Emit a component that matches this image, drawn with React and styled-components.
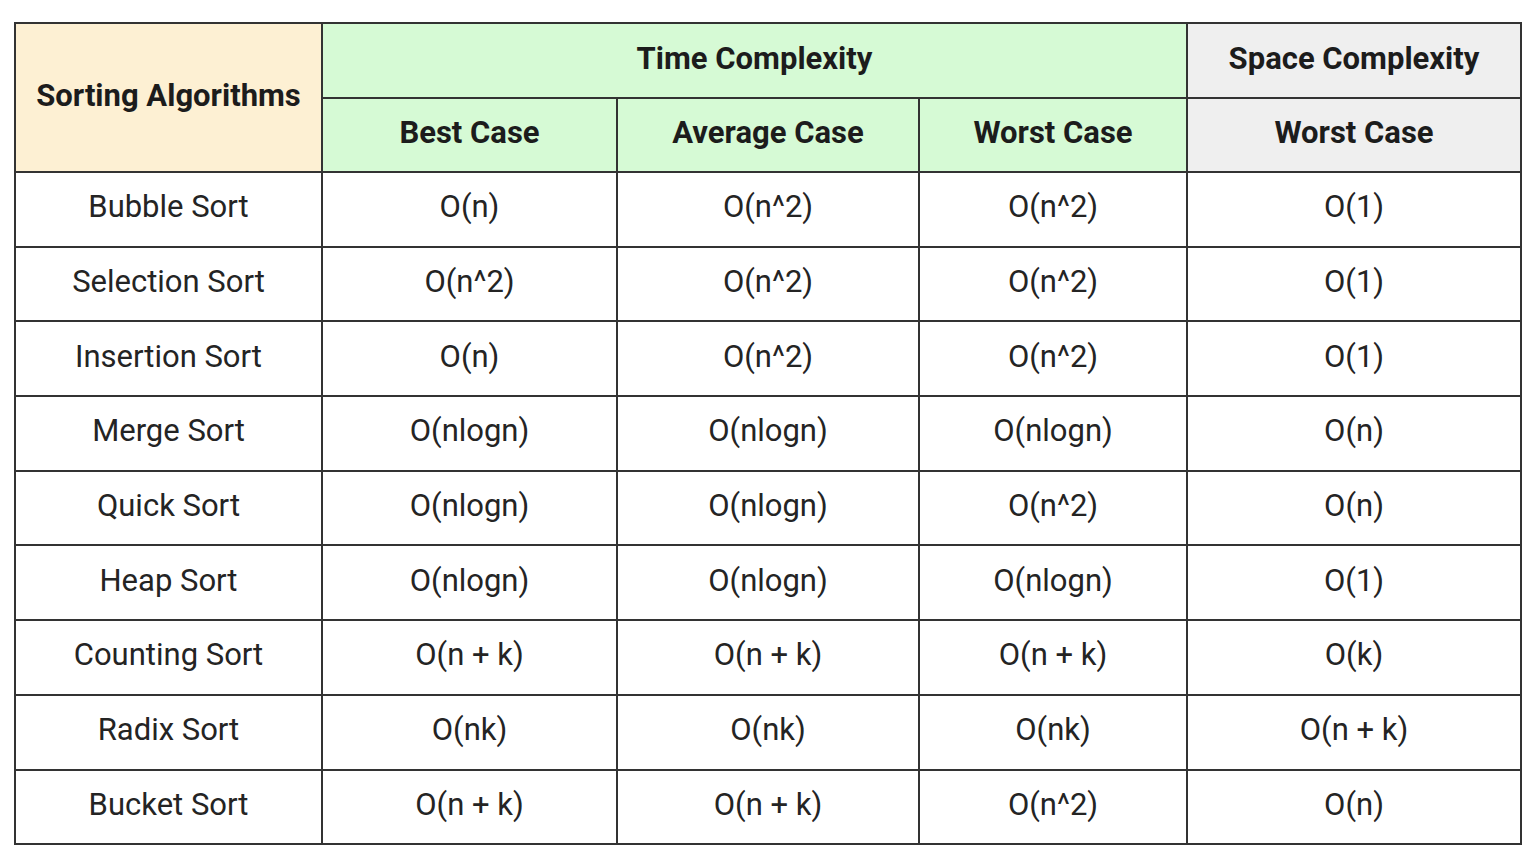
import styled, { createGlobalStyle } from 'styled-components'

const rows = [
  ['Bubble Sort', 'O(n)', 'O(n^2)', 'O(n^2)', 'O(1)'],
  ['Selection Sort', 'O(n^2)', 'O(n^2)', 'O(n^2)', 'O(1)'],
  ['Insertion Sort', 'O(n)', 'O(n^2)', 'O(n^2)', 'O(1)'],
  ['Merge Sort', 'O(nlogn)', 'O(nlogn)', 'O(nlogn)', 'O(n)'],
  ['Quick Sort', 'O(nlogn)', 'O(nlogn)', 'O(n^2)', 'O(n)'],
  ['Heap Sort', 'O(nlogn)', 'O(nlogn)', 'O(nlogn)', 'O(1)'],
  ['Counting Sort', 'O(n + k)', 'O(n + k)', 'O(n + k)', 'O(k)'],
  ['Radix Sort', 'O(nk)', 'O(nk)', 'O(nk)', 'O(n + k)'],
  ['Bucket Sort', 'O(n + k)', 'O(n + k)', 'O(n^2)', 'O(n)']
]

const colWidths = [307, 295, 302, 268, 334]

const GlobalStyle = createGlobalStyle`
  html, body {
    margin: 0;
    padding: 0;
    background: #ffffff;
  }
  body {
    font-family: Roboto, 'Liberation Sans', sans-serif;
  }
`

const Page = styled.div`
  width: 1532px;
  height: 862px;
  padding: 22px 11px 0 14px;
  box-sizing: border-box;
`

const Table = styled.table`
  width: 1508px;
  table-layout: fixed;
  border-collapse: collapse;
  border: 2px solid #333;
`

const HeadCell = styled.th`
  background: ${props => props.tone === 'peach' ? '#fdf0d3' : props.tone === 'green' ? '#d6fad5' : '#efefef'};
  height: ${props => props.h}px;
  border: 2px solid #333;
  font-size: 31px;
  font-weight: 700;
  color: #1c1c1c;
  text-align: center;
  vertical-align: middle;
  padding: 0 0 5px;
  line-height: 1;
`

const Cell = styled.td`
  height: 67.7px;
  border: 2px solid #333;
  font-size: 31px;
  font-weight: 400;
  color: #242424;
  text-align: center;
  vertical-align: middle;
  padding: 0 0 5px;
  line-height: 1;
  background: #fff;
`

const App = () => {
  return (
    <>
      <GlobalStyle />
      <Page>
        <Table>
          <colgroup>
            {colWidths.map((w, i) => (
              <col key={i} style={{ width: w }} />
            ))}
          </colgroup>
          <thead>
            <tr>
              <HeadCell rowSpan={2} tone="peach" h={68}>Sorting Algorithms</HeadCell>
              <HeadCell colSpan={3} tone="green" h={68}>Time Complexity</HeadCell>
              <HeadCell tone="gray" h={68}>Space Complexity</HeadCell>
            </tr>
            <tr>
              <HeadCell tone="green" h={67}>Best Case</HeadCell>
              <HeadCell tone="green" h={67}>Average Case</HeadCell>
              <HeadCell tone="green" h={67}>Worst Case</HeadCell>
              <HeadCell tone="gray" h={67}>Worst Case</HeadCell>
            </tr>
          </thead>
          <tbody>
            {rows.map((row) => (
              <tr key={row[0]}>
                {row.map((val, i) => (
                  <Cell key={i}>{val}</Cell>
                ))}
              </tr>
            ))}
          </tbody>
        </Table>
      </Page>
    </>
  )
}

export default App
